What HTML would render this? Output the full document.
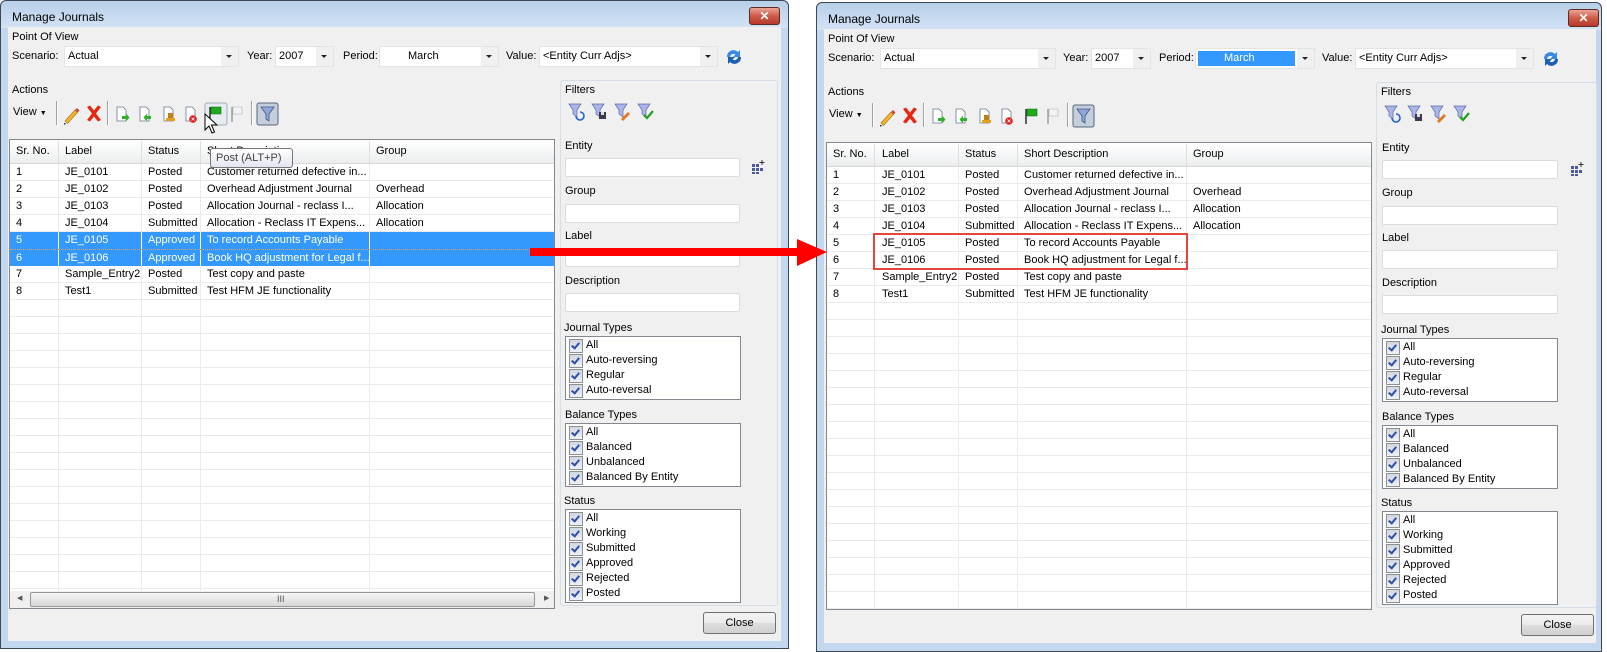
<!DOCTYPE html>
<html><head><meta charset="utf-8">
<style>
*{margin:0;padding:0;box-sizing:border-box}
body{width:1607px;height:652px;background:#fff;position:relative;overflow:hidden;font-family:"Liberation Sans",sans-serif;font-size:11px;color:#000}
.W{position:absolute;width:789px;height:649px}
.a{position:absolute;white-space:nowrap}
.frame{position:absolute;left:0;top:0;width:100%;height:100%;border:1px solid #3c4654;border-radius:6px 6px 0 0;background:linear-gradient(#b7cfe9,#d4e3f5 27px,#c3d7ee 27px)}
.title{left:12px;top:10px;font-size:12px}
.xbtn{top:7px;width:31px;height:18px;border:1px solid #5e2a22;border-radius:3px;background:linear-gradient(#eaa597,#cf5a48 50%,#b8392a);color:#fff;font-weight:bold;text-align:center;line-height:16px;font-size:12px}
.client{left:8px;top:27px;height:614px;background:#f0f0f0}
.combo{position:absolute;top:46px;height:21px;background:#fff;border:1px solid #e4e4e4}
.combo .dd{position:absolute;right:0;top:0;width:17px;height:19px;background:#f0f0f0}
.combo .dd:after{content:"";position:absolute;left:5px;top:8px;border-left:3px solid transparent;border-right:3px solid transparent;border-top:3px solid #222}
.lbl{top:50px}
.grid{position:absolute;left:9px;top:139px;width:546px;height:470px;border:1px solid #828790;background:#fff;overflow:hidden}
.hdr{position:absolute;left:0;top:0;width:100%;height:24px;background:linear-gradient(#fff,#f6f7f8 50%,#eceded);border-bottom:1px solid #d8d8d8}
.body{position:absolute;left:0;top:24px;width:100%;height:450px;background:repeating-linear-gradient(to bottom,transparent 0 16px,#ebebeb 16px 17px)}
.vl{position:absolute;top:0;width:1px;height:100%;background:#ebebeb}
.hvl{position:absolute;top:1px;width:1px;height:22px;background:#dedede}
.row{position:absolute;left:0;width:100%;height:17px;line-height:16px}
.sel{background:#3399ff;color:#fff}
.sel .vl{background:#fff}
.c0{position:absolute;left:6px}.c1{position:absolute;left:55px}.c2{position:absolute;left:138px}.c3{position:absolute;left:197px}.c4{position:absolute;left:366px}
.hdr span{line-height:23px}
.fpanel{position:absolute;left:560px;top:80px;width:218px;height:526px;border:1px solid #d5dde6;border-radius:3px}
.tb{position:absolute;left:565px;width:175px;height:19px;background:#fff;border:1px solid #dcdcdc;border-radius:2px}
.lst{position:absolute;left:565px;width:176px;background:#fff;border:1px solid #828790;padding-top:1px}
.it{position:relative;height:15px;line-height:15px;padding-left:20px}
.it:before{content:"";position:absolute;left:3px;top:1px;width:12px;height:12px;border:1px solid #8f8f8f;background:linear-gradient(#d0d8e2,#eef1f5)}
.it:after{content:"";position:absolute;left:7px;top:3px;width:3px;height:6px;border-right:2px solid #2d4fa6;border-bottom:2px solid #2d4fa6;transform:rotate(40deg)}
.btn{position:absolute;left:703px;top:612px;width:73px;height:22px;border:1px solid #707070;border-radius:3px;background:linear-gradient(#f3f3f3,#ebebeb 50%,#dedede 50%,#d0d0d0);text-align:center;line-height:20px}
.sep{position:absolute;top:101px;width:2px;height:24px;border-left:1px solid #a0a0a0;border-right:1px solid #fff}
</style></head><body>

<!-- ============ LEFT WINDOW ============ -->
<div class="W" style="left:0;top:0">
<div class="frame"></div>
<div class="a title">Manage Journals</div>
<div class="a xbtn" style="left:749px">✕</div>
<div class="a client" style="width:773px"></div>
<div class="a" style="left:12px;top:31px">Point Of View</div>
<div class="a lbl" style="left:12px">Scenario:</div>
<div class="combo" style="left:64px;width:175px"><span class="a" style="left:3px;top:3px">Actual</span><div class="dd"></div></div>
<div class="a lbl" style="left:247px">Year:</div>
<div class="combo" style="left:275px;width:59px"><span class="a" style="left:3px;top:3px">2007</span><div class="dd"></div></div>
<div class="a lbl" style="left:343px">Period:</div>
<div class="combo" style="left:379px;width:120px"><span class="a" style="left:28px;top:3px">March</span><div class="dd"></div></div>
<div class="a lbl" style="left:506px">Value:</div>
<div class="combo" style="left:539px;width:179px"><span class="a" style="left:3px;top:3px">&lt;Entity Curr Adjs&gt;</span><div class="dd"></div></div>
<svg class="a" style="left:725px;top:47px" width="18" height="20" viewBox="0 0 18 20"><path d="M2 10a6.5 6.5 0 0 1 11-5l2-2v7h-7l2.5-2.5A3.5 3.5 0 0 0 5 10z" fill="#3a8ae0"/><path d="M16 10a6.5 6.5 0 0 1-11 5l-2 2v-7h7l-2.5 2.5A3.5 3.5 0 0 0 13 10z" fill="#1c5fb6"/></svg>
<div class="a" style="left:12px;top:84px">Actions</div>
<div class="a" style="left:13px;top:106px">View <span style="font-size:7px">▼</span></div>
<div class="sep" style="left:56px"></div><div class="sep" style="left:107px"></div><div class="sep" style="left:251px"></div>
<svg class="a" style="left:62px;top:102px" width="220" height="24" viewBox="0 0 220 24">
<path d="M3 19l10-11 2.5 2.5-10 11z" fill="#f2b62c" stroke="#a06a10" stroke-width=".6"/><path d="M13 8l2-2 2.5 2.5-2 2z" fill="#d04a3a"/><rect x="2" y="21" width="1.5" height="1.5" fill="#333"/>
<path d="M25 5l3-1.5 4 5 4-5 3 1.5-5 6.5 5 6.5-3 1.5-4-5-4 5-3-1.5 5-6.5z" fill="#e8250e"/>
<g fill="#fff" stroke="#6a7a90" stroke-width=".8"><path d="M55 5h6l3 3v11h-9z"/><path d="M78 5h6l3 3v11h-9z"/><path d="M102 5h6l3 3v11h-9z"/><path d="M124 5h6l3 3v11h-9z"/></g>
<path d="M60 14h4v-2.5l3.5 4-3.5 4v-2.5h-4z" fill="#2fb02f"/>
<path d="M89 14h-4v-2.5l-3.5 4 3.5 4v-2.5h4z" fill="#2fb02f"/>
<rect x="104" y="16" width="9" height="3" fill="#e0a020"/><rect x="106" y="11" width="5" height="5" fill="#c08010"/>
<circle cx="131" cy="17" r="3.8" fill="#e02020"/><path d="M129.5 15.5l3 3M132.5 15.5l-3 3" stroke="#fff" stroke-width=".8"/>
<rect x="143" y="1" width="22" height="22" rx="2" fill="#e6ecf2" stroke="#a2adba"/>
<path d="M148 5v15" stroke="#222" stroke-width="1.4"/><path d="M149 5h10v7h-10z" fill="#1eaa1e" stroke="#0a6a0a" stroke-width=".6"/>
<path d="M170 5v15" stroke="#999" stroke-width="1.4"/><path d="M171 5h9v7h-9z" fill="#f4f4f4" stroke="#aaa" stroke-width=".6"/>
<rect x="195" y="1" width="21" height="22" rx="2" fill="#c5cfdb" stroke="#56667a"/><path d="M199 5h13l-5 7v7l-3-2v-5z" fill="#8fa8d8" stroke="#44548a" stroke-width=".8"/>
</svg>

<div class="grid">
<div class="hdr"><div class="hvl" style="left:48px"></div><div class="hvl" style="left:131px"></div><div class="hvl" style="left:190px"></div><div class="hvl" style="left:359px"></div>
<span class="c0">Sr. No.</span><span class="c1">Label</span><span class="c2">Status</span><span class="c3">Short Description</span><span class="c4">Group</span></div>
<div class="body"><div class="vl" style="left:48px"></div><div class="vl" style="left:131px"></div><div class="vl" style="left:190px"></div><div class="vl" style="left:359px"></div>
<div class="row" style="top:0"><span class="c0">1</span><span class="c1">JE_0101</span><span class="c2">Posted</span><span class="c3">Customer returned defective in...</span></div>
<div class="row" style="top:17px"><span class="c0">2</span><span class="c1">JE_0102</span><span class="c2">Posted</span><span class="c3">Overhead Adjustment Journal</span><span class="c4">Overhead</span></div>
<div class="row" style="top:34px"><span class="c0">3</span><span class="c1">JE_0103</span><span class="c2">Posted</span><span class="c3">Allocation Journal - reclass I...</span><span class="c4">Allocation</span></div>
<div class="row" style="top:51px"><span class="c0">4</span><span class="c1">JE_0104</span><span class="c2">Submitted</span><span class="c3">Allocation - Reclass IT Expens...</span><span class="c4">Allocation</span></div>
<div class="row sel" style="top:68px"><div class="vl" style="left:48px"></div><div class="vl" style="left:131px"></div><div class="vl" style="left:190px"></div><div class="vl" style="left:359px"></div><span class="c0">5</span><span class="c1">JE_0105</span><span class="c2">Approved</span><span class="c3">To record Accounts Payable</span></div>
<div class="row sel" style="top:85px;border-top:1px dotted #e8a060"><div class="vl" style="left:48px"></div><div class="vl" style="left:131px"></div><div class="vl" style="left:190px"></div><div class="vl" style="left:359px"></div><span class="c0">6</span><span class="c1">JE_0106</span><span class="c2">Approved</span><span class="c3">Book HQ adjustment for Legal f...</span></div>
<div class="row" style="top:102px"><span class="c0">7</span><span class="c1">Sample_Entry2</span><span class="c2">Posted</span><span class="c3">Test copy and paste</span></div>
<div class="row" style="top:119px"><span class="c0">8</span><span class="c1">Test1</span><span class="c2">Submitted</span><span class="c3">Test HFM JE functionality</span></div>
</div>
<div class="a" style="left:0;top:451px;width:544px;height:17px;background:#f0f0f0">
<span class="a" style="left:7px;top:3px;font-size:7px;color:#555">◀</span>
<div class="a" style="left:20px;top:1px;width:505px;height:15px;border:1px solid #979797;border-radius:2px;background:linear-gradient(#f6f6f6,#e6e6e6 50%,#d6d6d6)"><span class="a" style="left:246px;top:1px;font-size:9px;color:#555">III</span></div>
<span class="a" style="left:534px;top:3px;font-size:7px;color:#555">▶</span></div>
</div>
<div class="a" style="left:210px;top:148px;width:83px;height:20px;border:1px solid #767676;border-radius:3px;background:linear-gradient(#fff,#e4e5f0);padding:3px 5px;color:#444">Post (ALT+P)</div>
<svg class="a" style="left:204px;top:113px" width="14" height="22" viewBox="0 0 14 22"><path d="M1 1v16l4-4 3 7 2.5-1-3-7h5.5z" fill="#fff" stroke="#000"/></svg>

<div class="fpanel"></div>
<div class="a" style="left:565px;top:84px">Filters</div>
<svg class="a" style="left:568px;top:102px" width="90" height="20" viewBox="0 0 90 20">
<g fill="#aab6ea" stroke="#5a6aa8" stroke-width=".7"><path d="M1 2h12l-4 6v7l-4-3v-4z"/><path d="M24 2h12l-4 6v7l-4-3v-4z"/><path d="M47 2h12l-4 6v7l-4-3v-4z"/><path d="M70 2h12l-4 6v7l-4-3v-4z"/></g>
<path d="M8 14a4 4 0 1 0 4-4" fill="none" stroke="#1f63c8" stroke-width="1.6"/><rect x="31" y="10" width="7" height="7" fill="#3a3a4a"/><rect x="33" y="10" width="3" height="3" fill="#ddd"/>
<path d="M53 17l7-7 2 2-7 7z" fill="#e07a20"/><path d="M76 13l3 3 6-7" fill="none" stroke="#20a020" stroke-width="2.2"/></svg>
<div class="a" style="left:565px;top:140px">Entity</div>
<div class="tb" style="top:158px"></div>
<svg class="a" style="left:751px;top:160px" width="14" height="14"><g fill="#4a5a9a"><rect x="1" y="4" width="3" height="3"/><rect x="5" y="4" width="3" height="3"/><rect x="1" y="8" width="3" height="3"/><rect x="5" y="8" width="3" height="3"/><rect x="1" y="12" width="3" height="2"/><rect x="5" y="12" width="3" height="2"/><rect x="9" y="8" width="3" height="3"/></g><path d="M11 0v5M8.5 2.5h5" stroke="#333"/></svg>
<div class="a" style="left:565px;top:185px">Group</div>
<div class="tb" style="top:204px"></div>
<div class="a" style="left:565px;top:230px">Label</div>
<div class="tb" style="top:248px"></div>
<div class="a" style="left:565px;top:275px">Description</div>
<div class="tb" style="top:293px"></div>
<div class="a" style="left:564px;top:322px">Journal Types</div>
<div class="lst" style="top:336px;height:64px"><div class="it">All</div><div class="it">Auto-reversing</div><div class="it">Regular</div><div class="it">Auto-reversal</div></div>
<div class="a" style="left:565px;top:409px">Balance Types</div>
<div class="lst" style="top:423px;height:64px"><div class="it">All</div><div class="it">Balanced</div><div class="it">Unbalanced</div><div class="it">Balanced By Entity</div></div>
<div class="a" style="left:564px;top:495px">Status</div>
<div class="lst" style="top:509px;height:94px"><div class="it">All</div><div class="it">Working</div><div class="it">Submitted</div><div class="it">Approved</div><div class="it">Rejected</div><div class="it">Posted</div></div>
<div class="btn">Close</div>
</div>

<!-- ============ RIGHT WINDOW ============ -->
<div class="W" style="left:816px;top:2px;width:786px;height:650px">
<div class="frame"></div>
<div class="a title">Manage Journals</div>
<div class="a xbtn" style="left:752px">✕</div>
<div class="a client" style="width:772px"></div>
<div class="a" style="left:12px;top:31px">Point Of View</div>
<div class="a lbl" style="left:12px">Scenario:</div>
<div class="combo" style="left:64px;width:176px"><span class="a" style="left:3px;top:3px">Actual</span><div class="dd"></div></div>
<div class="a lbl" style="left:247px">Year:</div>
<div class="combo" style="left:275px;width:60px"><span class="a" style="left:3px;top:3px">2007</span><div class="dd"></div></div>
<div class="a lbl" style="left:343px">Period:</div>
<div class="combo" style="left:379px;width:120px"><div class="a" style="left:2px;top:2px;width:97px;height:15px;background:#3399ff"></div><span class="a" style="left:28px;top:3px;color:#fff">March</span><div class="dd"></div></div>
<div class="a lbl" style="left:506px">Value:</div>
<div class="combo" style="left:539px;width:179px"><span class="a" style="left:3px;top:3px">&lt;Entity Curr Adjs&gt;</span><div class="dd"></div></div>
<svg class="a" style="left:726px;top:47px" width="18" height="20" viewBox="0 0 18 20"><path d="M2 10a6.5 6.5 0 0 1 11-5l2-2v7h-7l2.5-2.5A3.5 3.5 0 0 0 5 10z" fill="#3a8ae0"/><path d="M16 10a6.5 6.5 0 0 1-11 5l-2 2v-7h7l-2.5 2.5A3.5 3.5 0 0 0 13 10z" fill="#1c5fb6"/></svg>
<div class="a" style="left:12px;top:84px">Actions</div>
<div class="a" style="left:13px;top:106px">View <span style="font-size:7px">▼</span></div>
<div class="sep" style="left:56px"></div><div class="sep" style="left:107px"></div><div class="sep" style="left:251px"></div>
<svg class="a" style="left:62px;top:102px" width="220" height="24" viewBox="0 0 220 24">
<path d="M3 19l10-11 2.5 2.5-10 11z" fill="#f2b62c" stroke="#a06a10" stroke-width=".6"/><path d="M13 8l2-2 2.5 2.5-2 2z" fill="#d04a3a"/><rect x="2" y="21" width="1.5" height="1.5" fill="#333"/>
<path d="M25 5l3-1.5 4 5 4-5 3 1.5-5 6.5 5 6.5-3 1.5-4-5-4 5-3-1.5 5-6.5z" fill="#e8250e"/>
<g fill="#fff" stroke="#6a7a90" stroke-width=".8"><path d="M55 5h6l3 3v11h-9z"/><path d="M78 5h6l3 3v11h-9z"/><path d="M102 5h6l3 3v11h-9z"/><path d="M124 5h6l3 3v11h-9z"/></g>
<path d="M60 14h4v-2.5l3.5 4-3.5 4v-2.5h-4z" fill="#2fb02f"/>
<path d="M89 14h-4v-2.5l-3.5 4 3.5 4v-2.5h4z" fill="#2fb02f"/>
<rect x="104" y="16" width="9" height="3" fill="#e0a020"/><rect x="106" y="11" width="5" height="5" fill="#c08010"/>
<circle cx="131" cy="17" r="3.8" fill="#e02020"/><path d="M129.5 15.5l3 3M132.5 15.5l-3 3" stroke="#fff" stroke-width=".8"/>
<path d="M148 5v15" stroke="#222" stroke-width="1.4"/><path d="M149 5h10v7h-10z" fill="#1eaa1e" stroke="#0a6a0a" stroke-width=".6"/>
<path d="M170 5v15" stroke="#999" stroke-width="1.4"/><path d="M171 5h9v7h-9z" fill="#f4f4f4" stroke="#aaa" stroke-width=".6"/>
<rect x="195" y="1" width="21" height="22" rx="2" fill="#c5cfdb" stroke="#56667a"/><path d="M199 5h13l-5 7v7l-3-2v-5z" fill="#8fa8d8" stroke="#44548a" stroke-width=".8"/>
</svg>

<div class="grid" style="left:10px;top:140px;height:468px">
<div class="hdr"><div class="hvl" style="left:47px"></div><div class="hvl" style="left:131px"></div><div class="hvl" style="left:190px"></div><div class="hvl" style="left:359px"></div>
<span class="c0">Sr. No.</span><span class="c1">Label</span><span class="c2">Status</span><span class="c3">Short Description</span><span class="c4">Group</span></div>
<div class="body"><div class="vl" style="left:47px"></div><div class="vl" style="left:131px"></div><div class="vl" style="left:190px"></div><div class="vl" style="left:359px"></div>
<div class="row" style="top:0"><span class="c0">1</span><span class="c1">JE_0101</span><span class="c2">Posted</span><span class="c3">Customer returned defective in...</span></div>
<div class="row" style="top:17px"><span class="c0">2</span><span class="c1">JE_0102</span><span class="c2">Posted</span><span class="c3">Overhead Adjustment Journal</span><span class="c4">Overhead</span></div>
<div class="row" style="top:34px"><span class="c0">3</span><span class="c1">JE_0103</span><span class="c2">Posted</span><span class="c3">Allocation Journal - reclass I...</span><span class="c4">Allocation</span></div>
<div class="row" style="top:51px"><span class="c0">4</span><span class="c1">JE_0104</span><span class="c2">Submitted</span><span class="c3">Allocation - Reclass IT Expens...</span><span class="c4">Allocation</span></div>
<div class="row" style="top:68px"><span class="c0">5</span><span class="c1">JE_0105</span><span class="c2">Posted</span><span class="c3">To record Accounts Payable</span></div>
<div class="row" style="top:85px"><span class="c0">6</span><span class="c1">JE_0106</span><span class="c2">Posted</span><span class="c3">Book HQ adjustment for Legal f...</span></div>
<div class="row" style="top:102px"><span class="c0">7</span><span class="c1">Sample_Entry2</span><span class="c2">Posted</span><span class="c3">Test copy and paste</span></div>
<div class="row" style="top:119px"><span class="c0">8</span><span class="c1">Test1</span><span class="c2">Submitted</span><span class="c3">Test HFM JE functionality</span></div>
</div>
</div>
<div class="a" style="left:57px;top:231px;width:315px;height:37px;border:2px solid #e5453c"></div>

<div class="fpanel" style="width:221px"></div>
<div class="a" style="left:565px;top:84px">Filters</div>
<svg class="a" style="left:568px;top:102px" width="90" height="20" viewBox="0 0 90 20">
<g fill="#aab6ea" stroke="#5a6aa8" stroke-width=".7"><path d="M1 2h12l-4 6v7l-4-3v-4z"/><path d="M24 2h12l-4 6v7l-4-3v-4z"/><path d="M47 2h12l-4 6v7l-4-3v-4z"/><path d="M70 2h12l-4 6v7l-4-3v-4z"/></g>
<path d="M8 14a4 4 0 1 0 4-4" fill="none" stroke="#1f63c8" stroke-width="1.6"/><rect x="31" y="10" width="7" height="7" fill="#3a3a4a"/><rect x="33" y="10" width="3" height="3" fill="#ddd"/>
<path d="M53 17l7-7 2 2-7 7z" fill="#e07a20"/><path d="M76 13l3 3 6-7" fill="none" stroke="#20a020" stroke-width="2.2"/></svg>
<div class="a" style="left:566px;top:140px">Entity</div>
<div class="tb" style="left:566px;top:158px;width:176px"></div>
<svg class="a" style="left:754px;top:160px" width="14" height="14"><g fill="#4a5a9a"><rect x="1" y="4" width="3" height="3"/><rect x="5" y="4" width="3" height="3"/><rect x="1" y="8" width="3" height="3"/><rect x="5" y="8" width="3" height="3"/><rect x="1" y="12" width="3" height="2"/><rect x="5" y="12" width="3" height="2"/><rect x="9" y="8" width="3" height="3"/></g><path d="M11 0v5M8.5 2.5h5" stroke="#333"/></svg>
<div class="a" style="left:566px;top:185px">Group</div>
<div class="tb" style="left:566px;top:204px;width:176px"></div>
<div class="a" style="left:566px;top:230px">Label</div>
<div class="tb" style="left:566px;top:248px;width:176px"></div>
<div class="a" style="left:566px;top:275px">Description</div>
<div class="tb" style="left:566px;top:293px;width:176px"></div>
<div class="a" style="left:565px;top:322px">Journal Types</div>
<div class="lst" style="left:566px;top:336px;height:64px"><div class="it">All</div><div class="it">Auto-reversing</div><div class="it">Regular</div><div class="it">Auto-reversal</div></div>
<div class="a" style="left:566px;top:409px">Balance Types</div>
<div class="lst" style="left:566px;top:423px;height:64px"><div class="it">All</div><div class="it">Balanced</div><div class="it">Unbalanced</div><div class="it">Balanced By Entity</div></div>
<div class="a" style="left:565px;top:495px">Status</div>
<div class="lst" style="left:566px;top:509px;height:94px"><div class="it">All</div><div class="it">Working</div><div class="it">Submitted</div><div class="it">Approved</div><div class="it">Rejected</div><div class="it">Posted</div></div>
<div class="btn" style="left:705px">Close</div>
</div>

<!-- red arrow -->
<svg class="a" style="left:0;top:0" width="1607" height="652">
<rect x="530" y="248" width="272" height="8" fill="#ff0000"/>
<path d="M797 239l30 13-30 14z" fill="#ff0000"/>
</svg>
</body></html>
